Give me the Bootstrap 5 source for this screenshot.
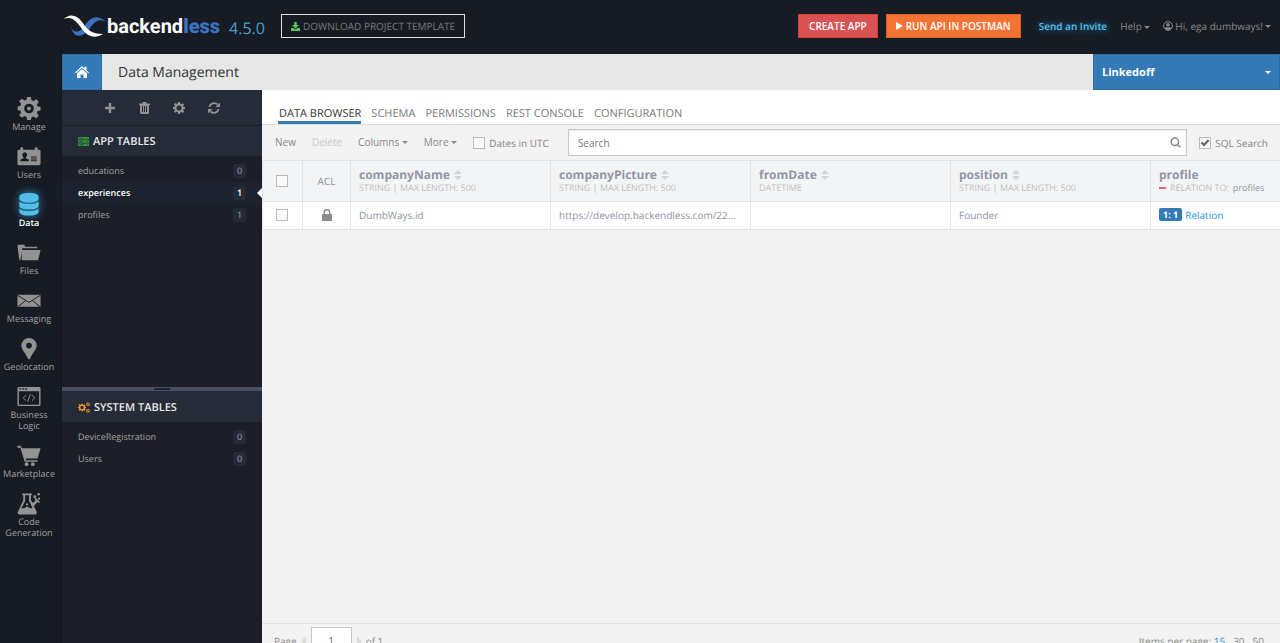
<!DOCTYPE html>
<html lang="en">
<head>
<meta charset="utf-8">
<meta name="viewport" content="width=device-width, initial-scale=1">
<title>Backendless - Data Management</title>
<link href="https://cdn.jsdelivr.net/npm/bootstrap@5.3.0/dist/css/bootstrap.min.css" rel="stylesheet">
<style>
  :root { --ink: #171b24; --panel: #1c1f28; --head: #262b38; --blue: #347ab7; --line: #e2e4e6; }
  body { font-family: "Open Sans", sans-serif; font-size: 10px; line-height: 14px; color: #888; background: var(--ink); overflow: hidden; text-rendering: geometricPrecision; }
  a { text-decoration: none; color: inherit; }
  button { font: inherit; color: inherit; background: none; border: 0; padding: 0; }
  svg { display: block; flex: none; fill: currentColor; }
  /* the pager sits partly below the fold */
  .shell { height: calc(100vh + 17px); }
  .mainnav { width: 62px; padding: 96px 3px 0 0; background: #171b23; flex: none; gap: 12px; border-right: 1px solid #14171f; }
  .mainnav a { color: #a2a2a2; line-height: 11px; font-size: 9px; text-align: center; }
  .mainnav svg { width: 24px; height: 25px; margin: 0 auto; color: #929292; }
  .mainnav .on { color: #fff; font-weight: 600; }
  .mainnav .on svg { color: #53bfe8; filter: drop-shadow(0 0 4px #2b91bb); }
  .topbar { height: 54px; flex: none; padding: 0 9px 2px 0; }
  .logo { gap: 1px; padding-left: 2px; }
  .brandmark { font: 700 20px/28px Roboto, sans-serif; color: #fff; }
  .brandmark b { color: #3c71c0; }
  .version { font-size: 16px; line-height: 20px; color: #4ba0c9; padding-top: 3px; margin-left: 9px; }
  .caret { width: 0; border: 3px solid transparent; border-top-color: currentColor; border-bottom: 0; display: inline-block; vertical-align: middle; }
  .flat { height: 24px; padding: 0 9px; border: 1px solid #ddd; color: #777; display: flex; align-items: center; gap: 3px; line-height: 14px; }
  .flat-red { background: #d95353; border-color: #d43f3a; color: #fff; font-weight: 600; padding: 0 10px; }
  .flat-orange { background: #f37335; border-color: #dd6129; color: #fff; font-weight: 600; }
  .invite { color: #53bfe8; font-weight: 600; text-shadow: 0 0 7px #2795c4; }
  .toplinks { gap: 13px; margin-left: 18px; }
  .user { gap: 2px; }
  .titlebar { height: 36px; background: #e7e7e7; flex: none; }
  .home { width: 40px; background: var(--blue); border: 1px solid #2e6da4; color: #fff; display: flex; align-items: center; justify-content: center; }
  .titlebar h1 { font-size: 14px; line-height: 20px; margin: 0; padding: 1px 0 0 16px; color: #333; font-weight: 400; }
  .appmenu { width: 187px; background: var(--blue); border: 1px solid #2e6da4; color: #fff; font-weight: 700; font-size: 11px; padding: 0 8px; }
  .side { width: 200px; flex: none; background: var(--panel); }
  .side-tools { height: 36px; background: var(--head); border-bottom: 1px solid #1b1f29; color: #929292; padding-left: 42px; gap: 23px; }
  .side h2 { height: 30px; margin: 0; background: var(--head); font-size: 11px; line-height: 16px; font-weight: 600; color: #e8e8e8; padding: 1px 16px 0; gap: 4px; }
  .side .system-head { height: 31px; padding-top: 2px; }
  .tables { list-style: none; margin: 0; padding: 4px 0; font-size: 9px; }
  .tables a { height: 22px; padding: 0 16px; color: #a2a2a2; }
  .tables .count { width: 13px; height: 14px; border-radius: 2px; background: #242b38; text-align: center; }
  .tables .on { background: #1d232e; color: #fff; font-weight: 600; position: relative; }
  .tables .on::after { content: ""; position: absolute; right: 0; border: 5px solid transparent; border-right-color: #fff; border-left: 0; }
  .tables-app { height: 231px; }
  .splitter { height: 4px; background: #465064; display: flex; justify-content: center; align-items: center; }
  .splitter span { width: 16px; height: 2px; background: #20252f; }
  .work { background: #f3f3f3; min-width: 0; }
  .tabs { height: 35px; background: #fff; border-bottom: 1px solid #dcdcdc; padding-left: 16px; gap: 9px; }
  .tabs a { font-size: 11px; line-height: 15px; padding: 0 0 0 1px; color: #777; border-bottom: 3px solid transparent; }
  .tabs .on { color: #333; border-color: var(--blue); }
  .tools { height: 35px; padding: 0 12px 0 13px; }
  .tools button { padding-bottom: 2px; }
  .tools button:disabled { color: #c8c8c8; }
  input.tick { appearance: none; width: 12px; height: 12px; border: 1px solid #bbb; background: #fafafa; margin: 0; display: block; flex: none; }
  input.tick:checked { background: #fafafa url("data:image/svg+xml,%3Csvg xmlns='http://www.w3.org/2000/svg' viewBox='0 0 10 10'%3E%3Cpath d='M1.5 4.5L4 7 8.7 2' fill='none' stroke='%23666' stroke-width='2.2'/%3E%3C/svg%3E"); }
  .search { height: 27px; border: 1px solid #c7c7c7; background: #fff; padding: 0 5px 0 9px; margin: 0 12px 0 19px; box-shadow: inset 0 1px 2px #0001; }
  .search input { border: 0; background: none; outline: 0; padding: 0; font: inherit; color: #555; min-width: 0; }
  .search input::placeholder { color: #777; opacity: 1; }
  .records { table-layout: fixed; width: 100%; border-collapse: collapse; color: #8d94a3; }
  .records th, .records td { border: 1px solid var(--line); padding: 0 8px; white-space: nowrap; overflow: hidden; }
  .records tr > :first-child { padding-right: 10px; }
  .records tr > :last-child { border-right: 0; padding-right: 0; }
  .records th { height: 41px; background: #f3f4f6; font-weight: 400; }
  .records td { height: 28px; background: #fff; }
  .records .tick, .records .lock { margin: 0 auto; }
  .lock { color: #8b8b8b; }
  .records tbody td { padding-bottom: 2px; }
  .col-pick { width: 40px; }
  .col-acl { width: 48px; }
  .col-data { width: 200px; }
  .colname { font-size: 12px; line-height: 13px; font-weight: 700; display: flex; gap: 4px; align-items: center; color: #9096a4; }
  .colname svg { color: #d3d5d8; }
  .coltype { font-size: 9px; line-height: 13px; color: #bfbfbf; display: flex; align-items: center; }
  .minus { width: 7px; height: 2px; background: #e06663; margin-right: 4px; }
  .coltype a { color: #8d94a3; margin-left: 4px; }
  .relation { display: flex; align-items: center; gap: 3px; }
  .rel { background: var(--blue); color: #fff; font-weight: 700; border-radius: 2px; padding: 0 4px; line-height: 13px; font-size: 9px; }
  .bluelink { color: #2499e3; }
  .pager { height: 37px; border-top: 1px solid var(--line); padding: 0 16px 2px 12px; }
  .pager input { width: 41px; height: 28px; border: 1px solid #c7c7c7; text-align: center; font: inherit; color: #666; margin: 0 5px; }
  .arr { width: 0; border: 5px solid transparent; }
  .arr-l { border-right-color: #ddd; border-left: 0; }
  .arr-r { border-left-color: #ddd; border-right: 0; }
</style>
</head>
<body>
<svg width="0" height="0" class="position-absolute" aria-hidden="true">
  <symbol id="gear" viewBox="0 0 24 24"><path fill-rule="evenodd" d="M10 0h4l.6 3.400 2 .9L19.500 2.300l2.700 2.700-2 2.900.9 2 3.400.6v3.500l-3.400.7-.9 2 2 2.800-2.700 2.700-2.900-2-2 .9L14 24h-4l-.6-3.500-2-.8-2.900 2L1.800 19l2-2.900-.9-2L0 13.500V10l2.900-.6.9-2-2-2.900L4.500 1.800l2.900 2 2-.8zM12 7a5 5 0 1 0 0 10a5 5 0 0 0 0-10z"/></symbol>
  <symbol id="sort" viewBox="0 0 8 10"><path d="M0 4L4 0l4 4zM0 6h8L4 10z"/></symbol>
</svg>
<div class="shell d-flex">
  <nav class="mainnav d-flex flex-column" aria-label="Main">
    <a href="#"><svg viewBox="0 0 24 26"><use href="#gear" x="0" y="1" width="24" height="24"/><circle cx="12" cy="13" r="2"/></svg>Manage</a>
    <a href="#"><svg viewBox="0 0 24 26"><path fill-rule="evenodd" d="M1 6h2V5a1.500 1.500 0 0 1 3 0v1h12V5a1.500 1.500 0 0 1 3 0v1h2l1 1v14l-1 1H1l-1-1V7zM7.500 8.500a2.500 2.800 0 0 0-1.300 5.200v1L3 16.500V18h9v-1.500l-3.200-1.800v-1A2.500 2.800 0 0 0 7.500 8.500zM14 13v1h6v-1zm0 2v1h6v-1zm0 2v1h6v-1z"/></svg>Users</a>
    <a href="#" class="on"><svg viewBox="0 0 24 26"><path d="M2 5c0-2.700 4-4 10-4s10 1.300 10 4v2.500c-1 2.300-5 3.300-10 3.300S3 9.800 2 7.500zM2 9.800c2 2 6 2.700 10 2.700s8-.7 10-2.700V15c-1 2-5 3-10 3S3 17 2 15zM2 17.200c2 2 6 2.700 10 2.700s8-.7 10-2.700V21c-1 2.600-5 3.500-10 3.500S3 23.600 2 21z"/></svg>Data</a>
    <a href="#"><svg viewBox="0 0 24 26"><path d="M0 6l1-1h6l1 2h12l1 1.500H5L3 21H2z"/><path d="M4 10.500h20L21.500 21h-17z"/></svg>Files</a>
    <a href="#"><svg viewBox="0 0 24 26"><path d="M0 7h24v12.500H0z"/><path d="M0 7.500l12 7.500 12-7.500M.5 19.500L8.500 13M23.500 19.500L15.500 13" fill="none" stroke="#171b23"/></svg>Messaging</a>
    <a href="#"><svg viewBox="0 0 24 26"><path fill-rule="evenodd" d="M12 2a8 8 0 0 1 8 8c0 4-5 9-6.500 13q-1.500 3-3 0C9 19 4 14 4 10a8 8 0 0 1 8-8zM12 7a3 3 0 1 0 0 6a3 3 0 0 0 0-6z"/></svg>Geolocation</a>
    <a href="#"><svg viewBox="0 0 24 26"><path fill-rule="evenodd" d="M1 3h22l1 1v18l-1 1H1l-1-1V4zM1.500 7.500v14h21v-14zM2 4.500v1.200h2V4.500zm3 0v1.200h2V4.500zm3 0v1.200h2V4.500z"/><path d="M9 11.500l-3 3 3 3M15 11.500l3 3-3 3M13.300 10.500l-2.600 8" fill="none" stroke="currentColor"/></svg>Business<br>Logic</a>
    <a href="#"><svg viewBox="0 0 24 26"><path d="M0 3l3-.5 1.800 3H24l-3 10.500H8.500l.5 2h12v1.500H7.500L3 5 0 5z"/><circle cx="9.500" cy="22" r="2"/><circle cx="16" cy="22" r="2"/></svg>Marketplace</a>
    <a href="#"><svg viewBox="0 0 24 26"><path d="M5 2.500h10V4.500h-1v5l2 3 3-3-1.500-1.500L19 7l4.500 4.500-1 1-1.500-1-4 4 3 6q.5 3-1.500 3H1.500q-2-1-1-3L6 10V4.500H5zM8 4.500v6L4 18h3l3-2 3.500 2h2l-1.500-4-2-3.500v-6z" fill-rule="evenodd"/><circle cx="10" cy="14" r="1.200"/><circle cx="18" cy="6" r="1.500"/><circle cx="22" cy="3.500" r="1.300"/><circle cx="22.500" cy="8" r="1.200"/></svg>Code<br>Generation</a>
  </nav>
  <div class="d-flex flex-column flex-grow-1 overflow-hidden">
    <header class="topbar d-flex align-items-center">
      <a href="#" class="logo d-flex align-items-center">
        <svg width="42" height="24" viewBox="0 0 42 24"><path d="M7 13c2 6 8 6 13 0C25 4 33-1 42 8c-7-4-11-1-16 6-6 9-16 12-19-1z" fill="#3c71c0"/><path d="M0 5C5 0 12 0 18 8c6 9 11 12 21 12-8 5-15 3-21-5C12 7 8 2 0 5z" fill="#fff"/></svg>
        <span class="brandmark">backend<b>less</b></span>
      </a>
      <span class="version">4.5.0</span>
      <a href="#" class="flat ms-3"><svg width="9" height="9" viewBox="0 0 9 9" style="color:#5cc45c"><path d="M3.300 0h2.400v3H8L4.500 6.500 1 3h2.300zM0 6h2.500l2 1.500 2-1.500H9v3H0z"/></svg>DOWNLOAD PROJECT TEMPLATE</a>
      <button class="flat flat-red ms-auto">CREATE APP</button>
      <button class="flat flat-orange ms-2"><svg width="7" height="8" viewBox="0 0 7 8"><path d="M0 0l7 4-7 4z"/></svg>RUN API IN POSTMAN</button>
      <div class="toplinks d-flex align-items-center">
        <a href="#" class="invite">Send an Invite</a>
        <a href="#">Help <span class="caret"></span></a>
        <a href="#" class="user d-flex align-items-center"><svg width="10" height="10" viewBox="0 0 10 10"><circle cx="5" cy="5" r="4.400" fill="none" stroke="currentColor"/><circle cx="5" cy="3.700" r="1.800"/><path d="M1.500 7.500Q3 5 5 6.500 7 5 8.500 7.500L5 9.500z"/></svg>Hi, ega dumbways! <span class="caret"></span></a>
      </div>
    </header>
    <div class="titlebar d-flex align-items-stretch">
      <a href="#" class="home" aria-label="Home"><svg width="14" height="12" viewBox="0 0 14 12"><path d="M7 0l2.500 2.400V.7h2v3.500L14 6.500l-.7.800L7 1.800.7 7.300 0 6.500z"/><path d="M7 2.900l5 4.300V12H8.500V8.500h-3V12H2V7.200z"/></svg></a>
      <h1 class="align-self-center">Data Management</h1>
      <button class="appmenu ms-auto d-flex align-items-center justify-content-between">Linkedoff <span class="caret"></span></button>
    </div>
    <div class="d-flex flex-grow-1">
      <aside class="side">
        <div class="side-tools d-flex align-items-center">
          <button aria-label="Add"><svg width="12" height="12" viewBox="0 0 12 12"><path d="M4.800 1h2.400v3.800H11v2.400H7.200V11H4.800V7.200H1V4.800h3.800z"/></svg></button>
          <button aria-label="Delete"><svg width="11" height="12" viewBox="0 0 11 12"><path fill-rule="evenodd" d="M3.500 0h4v1.500H11V3h-1v8l-1 1H2l-1-1V3H0V1.500h3.500zM3 4v6h1V4zm2 0v6h1V4zm2 0v6h1V4z"/></svg></button>
          <button aria-label="Settings"><svg width="12" height="12"><use href="#gear"/></svg></button>
          <button aria-label="Refresh"><svg width="12" height="12" viewBox="0 0 12 12"><path d="M1.300 5A5 5 0 0 1 9.500 2.500M10.700 7A5 5 0 0 1 2.500 9.500" fill="none" stroke="currentColor" stroke-width="1.800"/><path d="M12 .5V5H7.500zM0 11.500V7h4.500z"/></svg></button>
        </div>
        <h2 class="d-flex align-items-center"><svg width="11" height="9" viewBox="0 0 11 9" style="color:#38963f"><path d="M0 0h11v2.600H0zM0 3.200h11v2.600H0zM0 6.400h11V9H0z"/><path d="M1 1.300h5M1 4.500h4M1 7.700h5M9 1.300h1M9 4.500h1M9 7.700h1" stroke="#205b32"/></svg>APP TABLES</h2>
        <ul class="tables tables-app">
          <li><a href="#" class="d-flex align-items-center justify-content-between">educations<span class="count">0</span></a></li>
          <li><a href="#" class="on d-flex align-items-center justify-content-between">experiences<span class="count">1</span></a></li>
          <li><a href="#" class="d-flex align-items-center justify-content-between">profiles<span class="count">1</span></a></li>
        </ul>
        <div class="splitter"><span></span></div>
        <h2 class="system-head d-flex align-items-center"><svg width="12" height="11" viewBox="0 0 12 11" style="color:#f0962a"><use href="#gear" x="0" y="1.500" width="8" height="8"/><use href="#gear" x="8" y="0" width="4" height="4.500"/><use href="#gear" x="8" y="6.500" width="4" height="4.500"/></svg>SYSTEM TABLES</h2>
        <ul class="tables">
          <li><a href="#" class="d-flex align-items-center justify-content-between">DeviceRegistration<span class="count">0</span></a></li>
          <li><a href="#" class="d-flex align-items-center justify-content-between">Users<span class="count">0</span></a></li>
        </ul>
      </aside>
      <main class="work d-flex flex-column flex-grow-1">
        <nav class="tabs d-flex align-items-end" aria-label="Data">
          <a href="#" class="on">DATA BROWSER</a><a href="#">SCHEMA</a><a href="#">PERMISSIONS</a><a href="#">REST CONSOLE</a><a href="#">CONFIGURATION</a>
        </nav>
        <div class="tools d-flex align-items-center">
          <button>New</button>
          <button class="ms-3" disabled>Delete</button>
          <button class="ms-3">Columns <span class="caret"></span></button>
          <button class="ms-3">More <span class="caret"></span></button>
          <label class="ms-3 d-flex align-items-center gap-1"><input type="checkbox" class="tick">Dates in UTC</label>
          <label class="search d-flex align-items-center flex-grow-1"><input class="flex-grow-1" type="search" placeholder="Search" aria-label="Search"><svg width="11" height="11" viewBox="0 0 11 11"><path d="M7.500 7.500L10.300 10.300M8.500 4.800a3.700 3.700 0 1 1-7.400 0a3.700 3.700 0 0 1 7.400 0z" fill="none" stroke="currentColor" stroke-width="1.500"/></svg></label>
          <label class="d-flex align-items-center gap-1"><input type="checkbox" class="tick" checked>SQL Search</label>
        </div>
        <table class="records">
          <colgroup><col class="col-pick"><col class="col-acl"><col class="col-data"><col class="col-data"><col class="col-data"><col class="col-data"><col></colgroup>
          <thead>
            <tr>
              <th><input type="checkbox" class="tick" aria-label="Select all"></th>
              <th class="text-center">ACL</th>
              <th><div class="colname">companyName <svg width="8" height="10"><use href="#sort"/></svg></div><div class="coltype">STRING | MAX LENGTH: 500</div></th>
              <th><div class="colname">companyPicture <svg width="8" height="10"><use href="#sort"/></svg></div><div class="coltype">STRING | MAX LENGTH: 500</div></th>
              <th><div class="colname">fromDate <svg width="8" height="10"><use href="#sort"/></svg></div><div class="coltype">DATETIME</div></th>
              <th><div class="colname">position <svg width="8" height="10"><use href="#sort"/></svg></div><div class="coltype">STRING | MAX LENGTH: 500</div></th>
              <th><div class="colname">profile</div><div class="coltype"><span class="minus"></span>RELATION TO: <a href="#">profiles</a></div></th>
            </tr>
          </thead>
          <tbody>
            <tr>
              <td><input type="checkbox" class="tick" aria-label="Select record"></td>
              <td><svg width="10" height="12" viewBox="0 0 10 12" class="lock"><path d="M0 5h10v7H0z"/><path d="M2.300 5.500V3.500a2.700 2.700 0 0 1 5.400 0v2" fill="none" stroke="currentColor" stroke-width="1.500"/></svg></td>
              <td>DumbWays.id</td>
              <td>https://develop.backendless.com/22...</td>
              <td></td>
              <td>Founder</td>
              <td><span class="relation"><span class="rel">1: 1</span><a href="#" class="bluelink">Relation</a></span></td>
            </tr>
          </tbody>
        </table>
        <footer class="pager mt-auto d-flex align-items-center justify-content-between">
          <div class="d-flex align-items-center">Page <span class="arr arr-l ms-1"></span><input type="text" value="1" aria-label="Page"><span class="arr arr-r me-1"></span> of 1</div>
          <div class="d-flex gap-2"><span>Items per page: <a href="#" class="bluelink">15</a></span><a href="#">30</a><a href="#">50</a></div>
        </footer>
      </main>
    </div>
  </div>
</div>
<script src="https://cdn.jsdelivr.net/npm/bootstrap@5.3.0/dist/js/bootstrap.bundle.min.js"></script>
</body>
</html>
